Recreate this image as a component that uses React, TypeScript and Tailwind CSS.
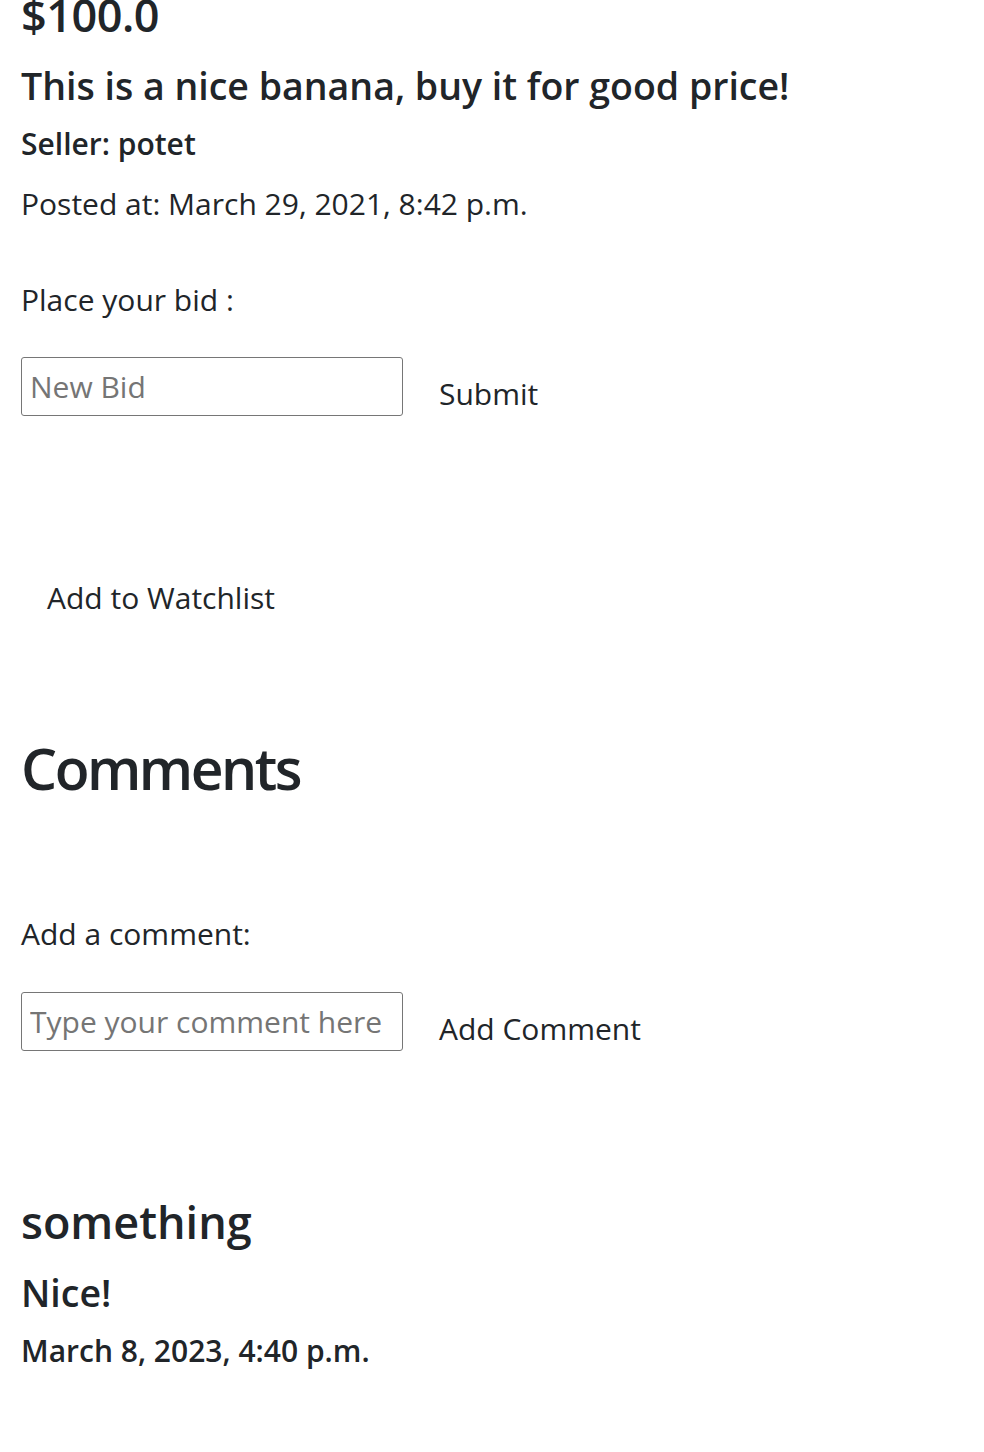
// App.tsx -- auction listing page: price, description, bid form, watchlist, comments.

const FONT = "font-['Open_Sans','Noto_Sans',sans-serif]";

type Comment = { author: string; text: string; at: string };

const COMMENTS: Comment[] = [
  { author: "something", text: "Nice!", at: "March 8, 2023, 4:40 p.m." },
];

function InlineForm({ placeholder, label }: { placeholder: string; label: string }) {
  return (
    <div className="flex items-start">
      <input
        type="text"
        placeholder={placeholder}
        className="h-[59px] w-[382px] rounded-[3px] border border-[#767676] bg-white px-[8px] text-[30px] text-[#212529] outline-none placeholder:text-[#757575]"
      />
      <button type="button" className="ml-[36px] mt-[19px] leading-[36px] text-[30px] text-[#212529]">
        {label}
      </button>
    </div>
  );
}

export default function App() {
  return (
    <div className={`${FONT} min-h-[1452px] overflow-hidden bg-white pl-[21px] text-[#212529]`}>
      <h4 className="-mt-[12px] text-[45px] font-semibold leading-[54px] tracking-[-0.5px]">$100.0</h4>
      <h5 className="mt-[21px] text-[37.5px] font-semibold leading-[45px]">
        This is a nice banana, buy it for good price!
      </h5>
      <h6 className="mt-[18px] text-[30px] font-semibold leading-[36px]">Seller: potet</h6>
      <p className="mt-[24px] text-[30px] leading-[36px]">Posted at: March 29, 2021, 8:42 p.m.</p>

      <p className="mt-[60px] text-[30px] leading-[36px]">Place your bid :</p>
      <div className="mt-[39px]">
        <InlineForm placeholder="New Bid" label="Submit" />
      </div>

      <button type="button" className="mt-[164px] block pl-[26px] text-[30px] leading-[36px] text-[#212529]">
        Add to Watchlist
      </button>

      <h2 className="mt-[116px] text-[57px] font-semibold leading-[72px] tracking-[-2.5px]">Comments</h2>

      <p className="mt-[112px] text-[30px] leading-[36px]">Add a comment:</p>
      <div className="mt-[40px]">
        <InlineForm placeholder="Type your comment here" label="Add Comment" />
      </div>

      {COMMENTS.map((c, i) => (
        <div key={i} className="mt-[144px]">
          <h4 className="text-[45px] font-semibold leading-[54px]">{c.author}</h4>
          <h5 className="mt-[21px] text-[37.5px] font-semibold leading-[45px]">{c.text}</h5>
          <h6 className="mt-[18px] text-[30px] font-semibold leading-[36px]">{c.at}</h6>
        </div>
      ))}
    </div>
  );
}
